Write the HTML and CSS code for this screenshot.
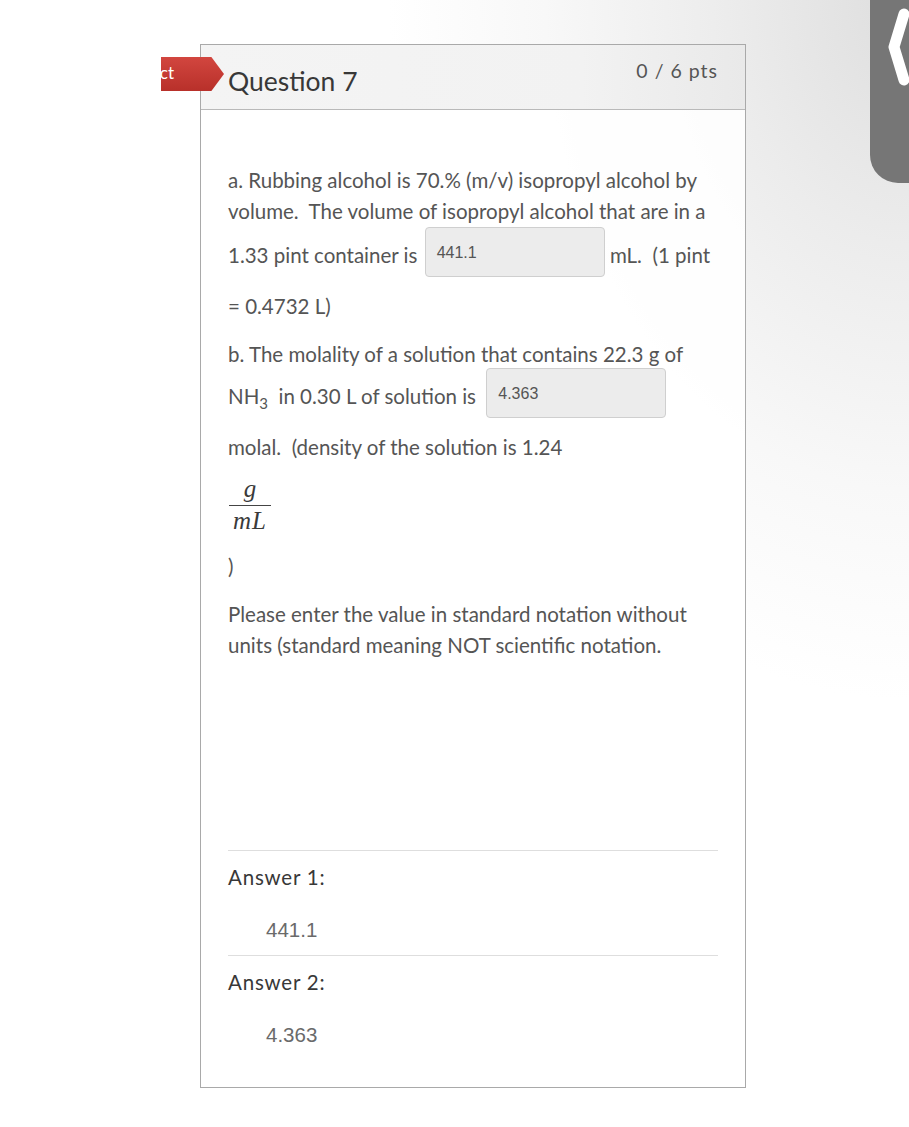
FILE: index.html
```html
<!DOCTYPE html>
<html>
<head>
<meta charset="utf-8">
<link rel="stylesheet" href="styles.css">
</head>
<body>
<div class="side-tab">
  <svg class="chevron" width="39" height="100" viewBox="0 0 39 100"><polyline points="34,14 24,47 34,80" fill="none" stroke="#fff" stroke-width="11" stroke-linejoin="round" stroke-linecap="round"/></svg>
</div>
<div class="card">
  <div class="card-header">
    <div class="flag"><span>Incorrect</span></div>
    <h2 class="q-title">Question 7</h2>
    <div class="q-points">0 / 6 pts</div>
  </div>
  <div class="card-body">
    <div class="q-text">
      <p class="para">a. Rubbing alcohol is 70.% (m/v) isopropyl alcohol by volume.&nbsp; The volume of isopropyl alcohol that are in a 1.33 pint container is <span class="blank">441.1</span> mL.&nbsp; (1 pint = 0.4732 L)</p>
      <p class="para para-tight">b. The molality of a solution that contains 22.3 g of NH<span class="sub">3</span>&nbsp; in 0.30 L of solution is <span class="blank blank-b">4.363</span> molal.&nbsp; (density of the solution is 1.24</p>
      <div class="frac">
        <span class="num">g</span>
        <span class="den">mL</span>
      </div>
      <p class="para">)</p>
      <p class="para">Please enter the value in standard notation without units (standard meaning NOT scientific notation.</p>
    </div>
    <div class="answer">
      <div class="a-label">Answer 1:</div>
      <div class="a-value">441.1</div>
    </div>
    <div class="answer">
      <div class="a-label">Answer 2:</div>
      <div class="a-value">4.363</div>
    </div>
  </div>
</div>
</body>
</html>
```
FILE: styles.css
```css
html, body {
  margin: 0;
  padding: 0;
}
body {
  width: 909px;
  min-height: 1127px;
  font-family: Lato, "Open Sans", sans-serif;
  color: #555;
  background: radial-gradient(ellipse 520px 700px at 100% 0%, #dedede 0%, #ececec 35%, #f8f8f8 70%, #ffffff 100%);
  background-color: #fff;
  position: relative;
  overflow: hidden;
}
.side-tab {
  position: absolute;
  top: 0;
  left: 870px;
  width: 39px;
  height: 183px;
  background: #767676;
  border-bottom-left-radius: 28px;
}
.chevron {
  display: block;
}
.card {
  margin: 44px 0 0 200px;
  width: 544px;
  border: 1px solid #a9a9a9;
  background: rgba(255, 255, 255, 0.88);
}
.card-header {
  position: relative;
  height: 64px;
  background: linear-gradient(90deg, #f4f4f4 0%, #f2f2f2 70%, #e9e9e9 100%);
  border-bottom: 1px solid #b9b9b9;
  display: flex;
  justify-content: space-between;
  align-items: flex-start;
  padding: 0 27px;
}
.flag {
  position: absolute;
  left: -40px;
  top: 12px;
  width: 63px;
  height: 34px;
  overflow: hidden;
  background: linear-gradient(180deg, #d2463f 0%, #b8302a 100%);
  clip-path: polygon(0 0, 80% 0, 100% 50%, 80% 100%, 0 100%);
}
.flag span {
  position: absolute;
  right: 50px;
  top: 6px;
  color: #fff;
  font-size: 17px;
  line-height: 20px;
  white-space: nowrap;
}
.q-title {
  margin: 21px 0 0;
  font-size: 26.5px;
  line-height: 30px;
  font-weight: 400;
  color: #383838;
}
.q-points {
  margin-top: 14px;
  font-size: 19.5px;
  line-height: 24px;
  color: #555;
  letter-spacing: 1px;
}
.card-body {
  padding: 55px 27px 27px;
}
.q-text {
  font-size: 20.5px;
  line-height: 31px;
  padding-bottom: 189px;
}
.para {
  margin: 0 0 17px;
}
.para-tight {
  margin-bottom: 13px;
}
.para:last-child {
  margin-bottom: 0;
}
.blank {
  display: inline-block;
  box-sizing: border-box;
  width: 180px;
  height: 50px;
  vertical-align: 5px;
  margin: 0 0 14px 2px;
  padding: 15px 11px 0;
  background: #ececec;
  border: 1px solid #cfcfcf;
  border-radius: 4px;
  font-family: "Liberation Sans", Arial, sans-serif;
  font-size: 16px;
  line-height: 20px;
  color: #555;
}
.blank-b {
  margin-top: -2px;
  margin-left: 5px;
}
.sub {
  position: relative;
  top: 5px;
  font-size: 15px;
}
.frac {
  display: flex;
  flex-direction: column;
  align-items: center;
  width: 42px;
  margin: 0 0 18px 1px;
  font-family: "Liberation Serif", "DejaVu Serif", serif;
  font-style: italic;
  font-size: 25px;
  line-height: 25px;
  color: #3a3a3a;
}
.num {
  display: block;
  width: 42px;
  text-align: center;
  padding-bottom: 4px;
  border-bottom: 1.5px solid #444;
}
.den {
  display: block;
  padding-top: 2px;
  letter-spacing: 1px;
}
.answer {
  border-top: 1px solid #dedede;
  padding: 11px 0 10px;
}
.a-label {
  font-size: 20.5px;
  line-height: 31px;
  color: #383838;
  letter-spacing: 0.8px;
}
.a-value {
  margin-top: 21px;
  padding-left: 38px;
  font-family: "Liberation Sans", Arial, sans-serif;
  font-size: 20.5px;
  line-height: 31px;
  color: #6a6a6a;
}
```
